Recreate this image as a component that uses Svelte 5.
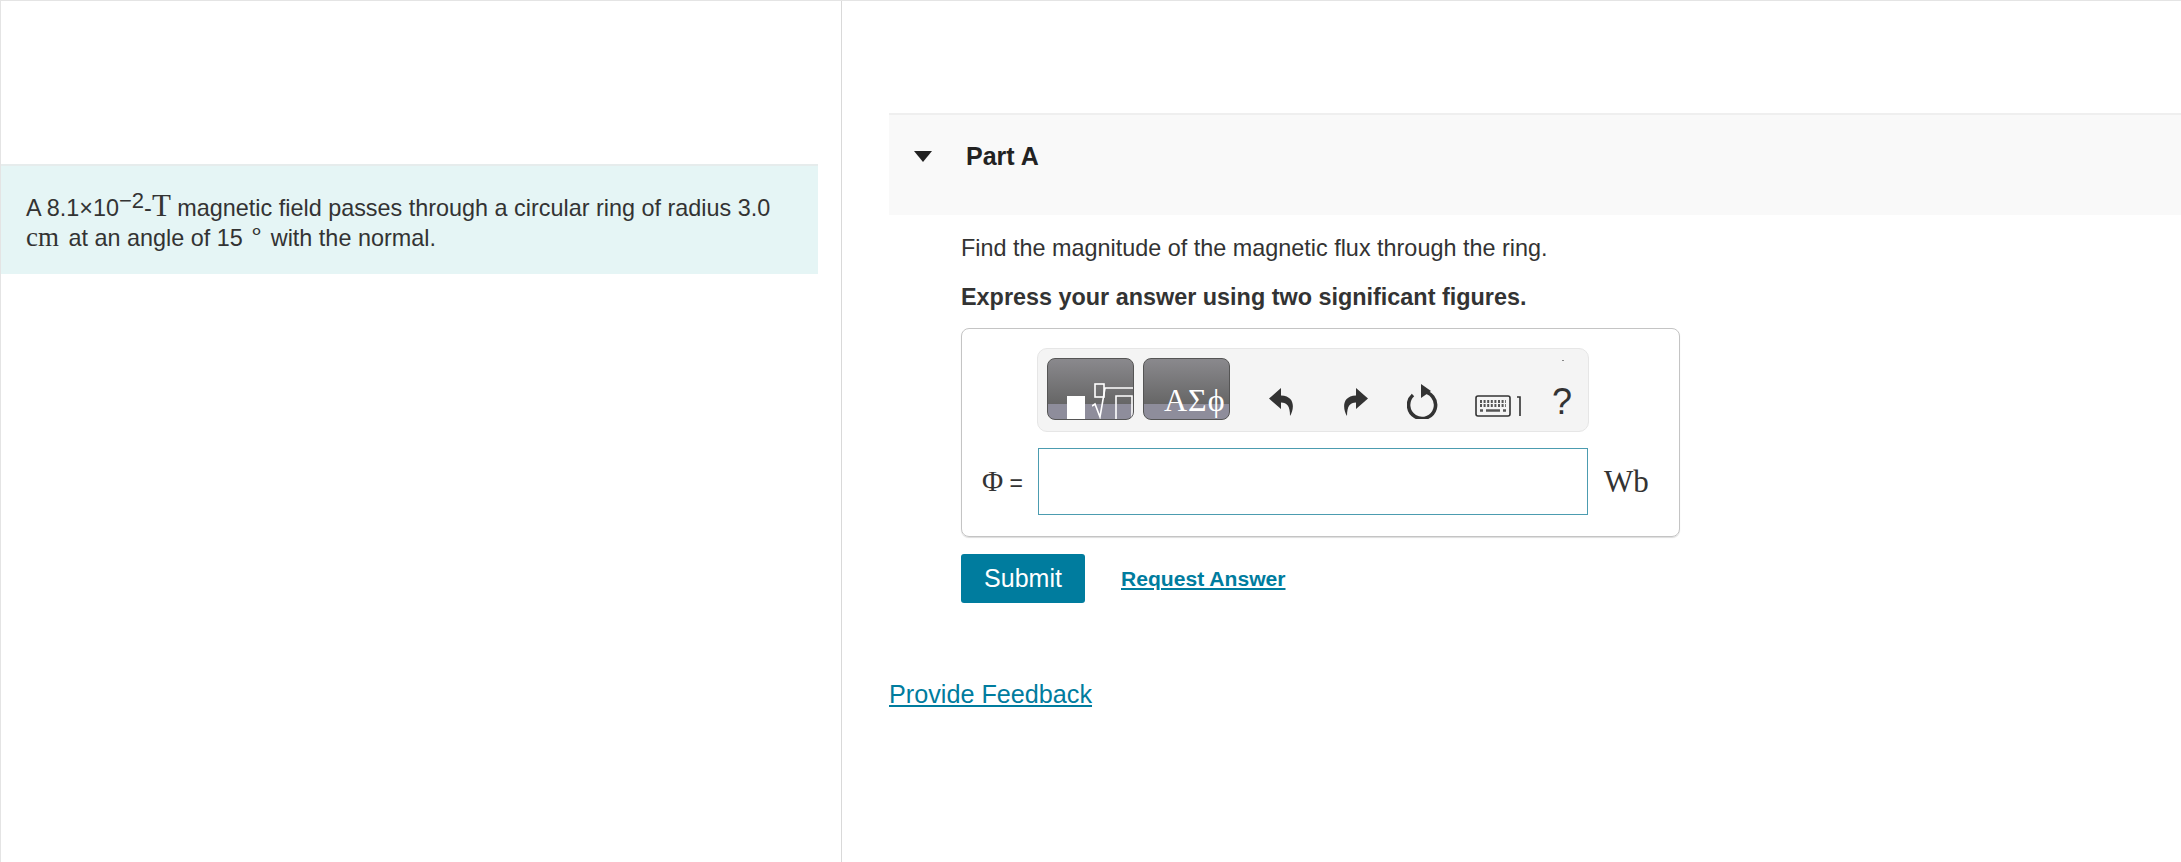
<script>
  let answer = $state('');
</script>

<div class="page">
  <aside class="intro">
    <div class="statement">
      <p>A 8.1×10<sup>−2</sup>-<span class="math big">T</span> magnetic field passes through a circular ring of radius 3.0 <span class="math unit-cm">cm</span> at an angle of 15 <sup class="deg">∘</sup> with the normal.</p>
    </div>
  </aside>

  <main class="content">
    <section class="part">
      <header class="part-head">
        <span class="caret"></span>
        <h2>Part A</h2>
      </header>

      <div class="part-body">
        <p class="question">Find the magnitude of the magnetic flux through the ring.</p>
        <p class="hint">Express your answer using two significant figures.</p>

        <div class="answer">
          <div class="toolbar">
            <button class="tpl tpl-root" aria-label="Templates">
              <span class="box"></span>
              <svg width="42" height="42" viewBox="0 0 42 42" fill="none" stroke="#fff" stroke-width="1.6">
                <rect x="3" y="7" width="9" height="13" />
                <path d="M0 29 L3 27 L8 40 L13 11 H42" />
                <path d="M24 42 V19 H40 V42" />
              </svg>
            </button>
            <button class="tpl tpl-greek">ΑΣϕ</button>

            <button class="tool undo" aria-label="Undo">
              <svg width="26" height="28" viewBox="0 0 26 28"><path fill="#333" d="M12 0 L0 10.5 L12 21 V14.5 C18 14.5 21 18 21 28 C25 22 27 8 12 7.5Z" /></svg>
            </button>
            <button class="tool redo" aria-label="Redo">
              <svg width="26" height="28" viewBox="0 0 26 28"><path fill="#333" d="M14 0 L26 10.5 L14 21 V14.5 C8 14.5 5 18 5 28 C1 22 -1 8 14 7.5Z" /></svg>
            </button>
            <button class="tool reset" aria-label="Reset">
              <svg width="31" height="35" viewBox="0 0 31 35" fill="none">
                <path stroke="#333" stroke-width="3.6" d="M15 7.5 A13.5 13.5 0 1 1 6 11" />
                <path fill="#333" d="M14 0 L24 7 L14 14Z" />
              </svg>
            </button>
            <button class="tool keys" aria-label="Keyboard">
              <svg width="48" height="22" viewBox="0 0 48 22" fill="none">
                <rect x="1" y="1" width="34" height="20" rx="2" stroke="#333" stroke-width="1.6" />
                <path stroke="#555" stroke-width="3" stroke-dasharray="2 1.6" d="M5 6.5 H31 M5 10.5 H31" />
                <path stroke="#555" stroke-width="2.4" d="M5 15.5 H8 M11 15.5 H25 M28 15.5 H31" />
                <path stroke="#333" stroke-width="1.6" d="M42 2 H45 V21" />
              </svg>
            </button>
            <span class="dot"></span>
            <button class="tool help">?</button>
          </div>

          <div class="entry">
            <label for="flux"><span class="math phi">Φ</span> =</label>
            <input id="flux" type="text" bind:value={answer} />
            <span class="unit">Wb</span>
          </div>
        </div>

        <div class="actions">
          <button class="submit">Submit</button>
          <a href="#request" class="request">Request Answer</a>
        </div>
      </div>
    </section>

    <a href="#feedback" class="feedback">Provide Feedback</a>
  </main>
</div>

<style>
  :global(body) {
    margin: 0;
    background: #fff;
  }

  .page {
    display: flex;
    height: 862px;
    box-sizing: border-box;
    overflow: hidden;
    border-top: 1px solid #e4e4e4;
    border-left: 1px solid #e4e4e4;
    font-family: "Liberation Sans", Arial, sans-serif;
    color: #333;
  }

  .intro {
    width: 841px;
    flex: none;
    box-sizing: border-box;
    padding-top: 163px;
    border-right: 1px solid #d9d9d9;
  }

  .statement {
    width: 817px;
    height: 110px;
    box-sizing: border-box;
    padding: 25px 25px 0;
    background: #e5f5f5;
    border-top: 2px solid #e6ecec;
  }

  .statement p {
    margin: 0;
    font-size: 23.4px;
    line-height: 29px;
  }

  sup {
    font-size: 22px;
    line-height: 0;
    vertical-align: 8px;
  }

  .deg {
    font-size: 24px;
    vertical-align: 7px;
  }

  .math {
    font-family: "Liberation Serif", "Times New Roman", serif;
    font-size: 27px;
  }

  .unit-cm {
    margin-right: 3px;
  }

  .big {
    font-size: 31px;
  }

  .content {
    flex: 1;
    min-width: 0;
    padding: 112px 0 0 47px;
  }

  .part-head {
    display: flex;
    align-items: flex-start;
    height: 102px;
    box-sizing: border-box;
    padding: 27px 0 0 25px;
    background: #f9f9f9;
    border-top: 2px solid #efefef;
  }

  .caret {
    width: 0;
    height: 0;
    margin-top: 9px;
    border-left: 9px solid transparent;
    border-right: 9px solid transparent;
    border-top: 11px solid #222;
  }

  h2 {
    margin: 0 0 0 34px;
    font-size: 25px;
    line-height: 28px;
    color: #222;
  }

  .part-body {
    padding: 19px 0 0 72px;
  }

  .question,
  .hint {
    margin: 0;
    font-size: 23.4px;
    line-height: 28px;
  }

  .hint {
    margin-top: 21px;
    font-weight: bold;
  }

  .answer {
    width: 719px;
    height: 209px;
    box-sizing: border-box;
    margin-top: 17px;
    padding: 19px 0 0 75px;
    border: 1px solid #c4c4c4;
    border-radius: 8px;
    box-shadow: 0 1px 1px #ddd;
  }

  .toolbar {
    position: relative;
    display: flex;
    align-items: flex-start;
    width: 552px;
    height: 84px;
    box-sizing: border-box;
    padding: 9px 0 0 9px;
    background: #f4f4f4;
    border: 1px solid #e6e6e6;
    border-radius: 10px;
  }

  button {
    font-family: inherit;
    padding: 0;
    border: 0;
    background: none;
  }

  .tpl {
    position: relative;
    width: 87px;
    height: 62px;
    overflow: hidden;
    color: #fff;
    border: 1px solid #555;
    border-radius: 8px;
    box-sizing: border-box;
    background: linear-gradient(#8a898d, #666 75%, #8e8d9b 75%, #8e8d9b);
  }

  .tpl-greek {
    margin-left: 9px;
    padding: 21px 0 0 20px;
    font-family: "Liberation Serif", serif;
    font-size: 32px;
    line-height: 40px;
    letter-spacing: 1px;
    white-space: nowrap;
    text-align: left;
  }

  .box {
    position: absolute;
    left: 19px;
    bottom: 0;
    width: 18px;
    height: 23px;
    background: #fff;
  }

  .tpl-root svg {
    position: absolute;
    left: 44px;
    bottom: 0;
  }

  .tool {
    display: block;
    line-height: 0;
  }

  .undo {
    margin: 30px 0 0 39px;
  }

  .redo {
    margin: 30px 0 0 47px;
  }

  .reset {
    margin: 26px 0 0 39px;
  }

  .keys {
    margin: 37px 0 0 37px;
  }

  .help {
    margin: 30px 0 0 29px;
    font-size: 36px;
    line-height: 28px;
    color: #333;
  }

  .dot {
    position: absolute;
    left: 524px;
    top: 11px;
    width: 2px;
    height: 1px;
    background: #888;
  }

  .entry {
    display: flex;
    align-items: center;
    margin: 16px 0 0 -75px;
  }

  label {
    width: 76px;
    box-sizing: border-box;
    padding-left: 20px;
    font-size: 23px;
    white-space: nowrap;
  }

  .phi {
    font-size: 29px;
  }

  input {
    width: 550px;
    height: 67px;
    box-sizing: border-box;
    border: 1px solid #4c9cb0;
    background: #fff;
    outline: 0;
  }

  .unit {
    margin-left: 16px;
    font-family: "Liberation Serif", serif;
    font-size: 31px;
    color: #333;
  }

  .actions {
    display: flex;
    align-items: center;
    margin-top: 17px;
  }

  .submit {
    width: 124px;
    height: 49px;
    color: #fff;
    font-size: 25px;
    background: #007c9e;
    border-radius: 3px;
  }

  .request {
    margin-left: 36px;
    font-size: 21.1px;
    font-weight: bold;
    color: #007c9e;
  }

  .feedback {
    display: inline-block;
    margin-top: 76px;
    font-size: 25.2px;
    line-height: 30px;
    color: #007c9e;
  }
</style>
